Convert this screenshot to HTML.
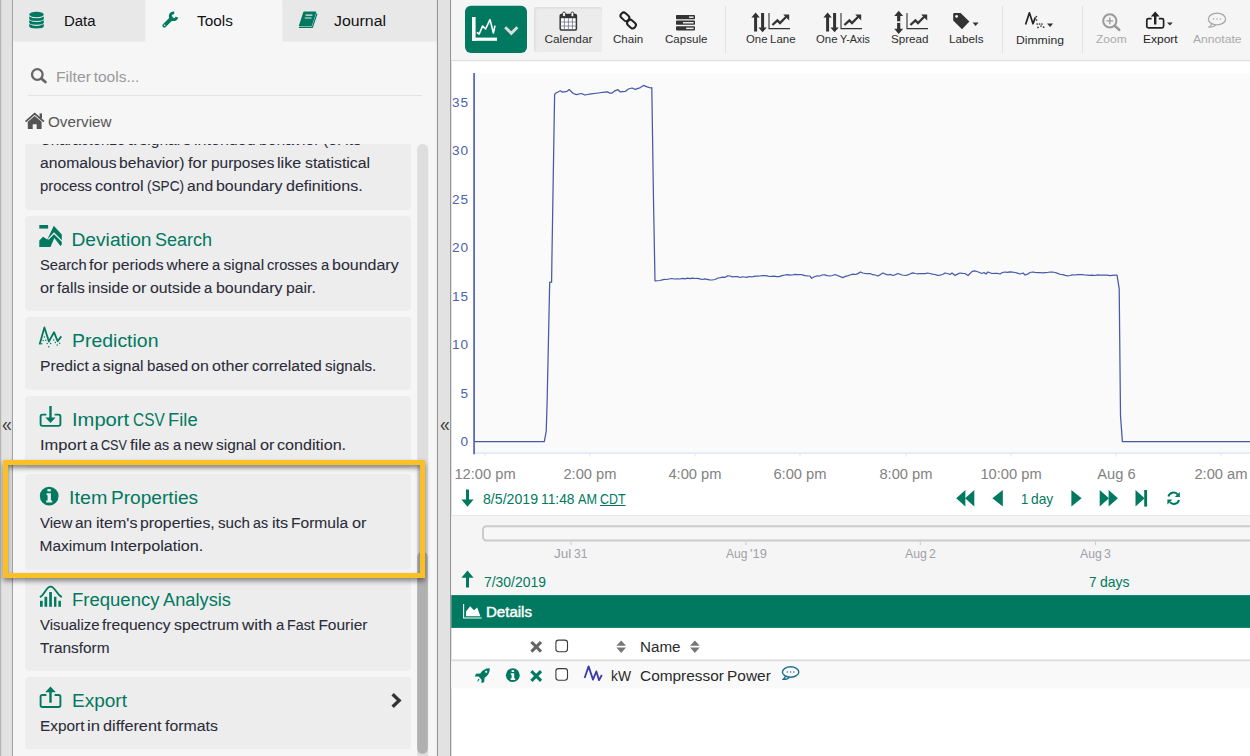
<!DOCTYPE html>
<html lang="en"><head><meta charset="utf-8"><title>Seeq Workbench</title>
<style>
html,body{margin:0;padding:0;}
body{width:1250px;height:756px;overflow:hidden;position:relative;background:#fff;font-family:"Liberation Sans",sans-serif;}
.t{position:absolute;white-space:nowrap;line-height:1;transform-origin:0 50%;display:block;}
.abs{position:absolute;}
svg{position:absolute;overflow:visible;left:0;top:0;}
svg text{font-family:"Liberation Sans",sans-serif;}
</style></head><body>
<svg id="bgl" width="1250" height="756" viewBox="0 0 1250 756">
<rect x="0" y="0" width="13" height="756" fill="#e2e2e2"/>
<rect x="0" y="0" width="1.2" height="756" fill="#b4b4b4"/>
<rect x="11.9" y="0" width="1.1" height="756" fill="#a4a4a4"/>
<rect x="13" y="0" width="424" height="756" fill="#f6f6f6"/>
<rect x="13" y="0" width="132.6" height="41.5" fill="#e8e8e8"/>
<rect x="282.2" y="0" width="155" height="41.5" fill="#e8e8e8"/>
<path d="M145.6,41.5 L145.6,3.5 Q145.6,0 149.1,0 L278.7,0 Q282.2,0 282.2,3.5 L282.2,41.5 Z" fill="#f6f6f6"/>
<rect x="436.9" y="0" width="1.4" height="756" fill="#979797"/>
<rect x="438.3" y="0" width="11.7" height="756" fill="#e2e2e2"/>
<rect x="450" y="0" width="1.3" height="756" fill="#979797"/>
<rect x="28" y="95" width="394" height="1" fill="#e3e3e3"/>
<path d="M25,144 L411,144 L411,206 Q411,210 407,210 L29,210 Q25,210 25,206 Z" fill="#ededed"/>
<rect x="25" y="216" width="386" height="94.8" rx="4" fill="#ededed"/>
<rect x="25" y="316.8" width="386" height="73.0" rx="4" fill="#ededed"/>
<rect x="25" y="396" width="386" height="71.9" rx="4" fill="#ededed"/>
<rect x="25" y="474" width="386" height="95.7" rx="4" fill="#ededed"/>
<rect x="25" y="575.8" width="386" height="95.0" rx="4" fill="#ededed"/>
<rect x="25" y="676.8" width="386" height="72.8" rx="4" fill="#ededed"/>
<rect x="417.2" y="144" width="11" height="640" rx="5.4" fill="#dedede"/>
<rect x="417.2" y="551.6" width="10.6" height="202.2" rx="5.3" fill="#b0b0b0"/>
<rect x="451.3" y="0" width="799" height="60" fill="#f5f5f5"/>
<rect x="451.3" y="60" width="799" height="1.2" fill="#dfdfdf"/>
<rect x="465" y="5.8" width="62" height="47.2" rx="6" fill="#007960"/>
<rect x="534" y="7" width="68" height="45" rx="2" fill="#ececec"/>
<rect x="725" y="6" width="1" height="47" fill="#e2e2e2"/>
<rect x="1002" y="6" width="1" height="47" fill="#e2e2e2"/>
<rect x="1082" y="6" width="1" height="47" fill="#e2e2e2"/>
<rect x="451.3" y="515" width="799" height="1" fill="#e6e6e6"/>
<rect x="451.3" y="516" width="799" height="79.2" fill="#f5f5f5"/>
<rect x="483" y="526.3" width="800" height="14.3" rx="3.5" fill="#f7f7f7" stroke="#cbcbcb" stroke-width="2"/>
<rect x="451.3" y="595.1" width="799" height="32.8" fill="#007960"/>
<rect x="451.3" y="659.4" width="799" height="2.2" fill="#dedede"/>
<rect x="451.3" y="661.6" width="799" height="26.9" fill="#f9f9f9"/>
<g id="chart">
<rect x="475" y="73.6" width="775" height="379.4" fill="#fafafa"/>
<rect x="473.2" y="73" width="1.8" height="381.3" fill="#5c6bb6"/>
<rect x="475" y="452.6" width="775" height="1" fill="#d6dbee"/>
<rect x="484.5" y="453.6" width="1" height="3" fill="#dfe3f3"/>
<rect x="589.5" y="453.6" width="1" height="3" fill="#dfe3f3"/>
<rect x="694.5" y="453.6" width="1" height="3" fill="#dfe3f3"/>
<rect x="799.5" y="453.6" width="1" height="3" fill="#dfe3f3"/>
<rect x="905.5" y="453.6" width="1" height="3" fill="#dfe3f3"/>
<rect x="1010.5" y="453.6" width="1" height="3" fill="#dfe3f3"/>
<rect x="1115.5" y="453.6" width="1" height="3" fill="#dfe3f3"/>
<rect x="1220.5" y="453.6" width="1" height="3" fill="#dfe3f3"/>
<text x="468.8" y="106.7" text-anchor="end" font-size="13.6" fill="#4c5fb0" letter-spacing="0.8">35</text>
<text x="468.8" y="155.2" text-anchor="end" font-size="13.6" fill="#4c5fb0" letter-spacing="0.8">30</text>
<text x="468.8" y="203.8" text-anchor="end" font-size="13.6" fill="#4c5fb0" letter-spacing="0.8">25</text>
<text x="468.8" y="252.3" text-anchor="end" font-size="13.6" fill="#4c5fb0" letter-spacing="0.8">20</text>
<text x="468.8" y="300.8" text-anchor="end" font-size="13.6" fill="#4c5fb0" letter-spacing="0.8">15</text>
<text x="468.8" y="349.3" text-anchor="end" font-size="13.6" fill="#4c5fb0" letter-spacing="0.8">10</text>
<text x="468.8" y="397.9" text-anchor="end" font-size="13.6" fill="#4c5fb0" letter-spacing="0.8">5</text>
<text x="468.8" y="446.4" text-anchor="end" font-size="13.6" fill="#4c5fb0" letter-spacing="0.8">0</text>
<text x="485" y="479" text-anchor="middle" font-size="14.7" fill="#828282">12:00 pm</text>
<text x="590" y="479" text-anchor="middle" font-size="14.7" fill="#828282">2:00 pm</text>
<text x="695" y="479" text-anchor="middle" font-size="14.7" fill="#828282">4:00 pm</text>
<text x="800" y="479" text-anchor="middle" font-size="14.7" fill="#828282">6:00 pm</text>
<text x="906" y="479" text-anchor="middle" font-size="14.7" fill="#828282">8:00 pm</text>
<text x="1011" y="479" text-anchor="middle" font-size="14.7" fill="#828282">10:00 pm</text>
<text x="1116.5" y="479" text-anchor="middle" font-size="14.7" fill="#828282">Aug 6</text>
<text x="1221" y="479" text-anchor="middle" font-size="14.7" fill="#828282">2:00 am</text>
<path fill="none" stroke="#4659a7" stroke-width="1.25" stroke-linejoin="round" d="M474.5,441.6 L544.3,441.6 L546.2,431.4 L547.1,402.9 L549.7,282.2 L551.6,282.2 L551.9,260.0 L554.6,94.7 L555.6,93.2 L560.3,90.8 L562.4,92.1 L567.0,91.4 L569.1,89.5 L573.3,93.5 L576.4,94.7 L581.6,93.5 L584.7,95.0 L591.0,93.9 L598.2,93.0 L604.5,92.1 L607.6,91.8 L609.7,93.2 L611.8,93.2 L614.9,90.8 L618.0,89.7 L620.1,91.8 L625.3,91.4 L628.4,89.0 L632.0,88.0 L635.2,89.3 L640.4,87.6 L643.5,85.4 L647.1,86.9 L650.8,88.0 L651.8,87.6 L653.5,200.0 L655.0,280.8 L660.0,280.5 L662.2,279.9 L664.5,279.4 L666.8,279.5 L669.0,279.0 L671.8,278.5 L674.5,279.0 L677.2,278.9 L680.0,279.0 L682.5,278.4 L685.0,278.8 L687.5,278.2 L690.0,278.6 L692.5,278.1 L695.0,278.5 L697.4,278.3 L699.9,278.8 L702.3,279.5 L704.7,278.9 L707.1,279.3 L709.6,279.9 L712.0,280.0 L715.0,279.5 L718.0,278.0 L720.4,277.7 L722.8,277.1 L725.2,277.3 L727.6,275.9 L730.0,276.0 L732.5,276.8 L735.0,276.5 L737.5,276.7 L740.0,277.5 L742.2,276.9 L744.4,277.0 L746.7,277.3 L748.9,276.5 L751.1,276.8 L753.3,276.7 L755.6,276.2 L757.8,276.2 L760.0,276.0 L762.4,275.6 L764.8,275.7 L767.1,275.9 L769.5,276.5 L771.9,276.3 L774.2,276.2 L776.6,276.6 L779.0,276.6 L782.0,275.7 L785.0,275.0 L787.5,274.7 L790.0,275.2 L792.5,275.0 L795.0,274.4 L797.5,274.7 L800.0,274.5 L802.5,274.9 L805.0,275.7 L807.5,275.9 L810.0,276.0 L811.6,278.3 L815.0,276.5 L817.3,275.8 L819.7,276.0 L822.0,275.0 L824.7,274.9 L827.3,275.6 L830.0,276.0 L832.5,275.5 L835.0,274.5 L842.8,277.7 L845.2,276.4 L847.6,275.9 L850.0,275.0 L853.0,274.2 L856.0,274.5 L858.2,273.4 L860.5,272.0 L862.8,273.0 L865.0,273.5 L867.5,273.6 L870.0,273.5 L872.7,274.7 L875.3,275.0 L878.0,276.0 L883.0,273.0 L885.5,274.2 L888.0,275.0 L890.0,274.3 L893.0,275.5 L895.5,274.6 L898.0,273.5 L902.0,275.0 L906.0,275.5 L908.3,274.7 L910.6,273.7 L912.9,272.9 L915.3,273.5 L917.6,273.8 L920.0,273.5 L922.5,273.5 L925.0,273.7 L927.5,273.0 L930.0,273.5 L932.5,274.1 L935.0,274.5 L937.5,275.3 L940.0,275.2 L942.5,274.5 L945.0,273.0 L947.5,273.5 L950.0,274.5 L952.0,273.0 L955.0,275.5 L957.5,274.1 L960.0,273.0 L962.5,273.4 L965.0,273.5 L968.0,275.5 L972.2,271.4 L974.6,270.9 L977.0,271.5 L979.5,272.5 L982.0,273.5 L984.0,272.5 L986.0,274.0 L988.0,272.0 L992.0,273.5 L994.7,273.3 L997.3,273.4 L1000.0,274.0 L1002.5,272.5 L1005.0,272.0 L1007.5,272.4 L1010.0,271.8 L1012.5,272.1 L1015.0,272.5 L1017.5,273.1 L1020.0,274.0 L1023.0,273.0 L1025.0,275.0 L1027.5,274.2 L1030.0,272.5 L1032.5,272.0 L1035.0,272.4 L1037.5,272.6 L1040.0,272.5 L1042.5,272.8 L1045.0,272.6 L1047.5,272.5 L1050.0,272.0 L1052.5,272.0 L1055.0,272.5 L1057.8,273.4 L1060.5,274.5 L1062.9,274.6 L1065.2,275.4 L1067.6,275.8 L1070.0,275.5 L1072.5,274.9 L1075.0,275.0 L1077.5,274.6 L1080.0,274.7 L1082.5,274.7 L1085.0,275.0 L1087.5,275.1 L1090.0,275.3 L1092.5,275.1 L1095.0,275.5 L1097.5,274.8 L1100.0,275.2 L1102.5,275.0 L1105.0,275.0 L1107.4,275.1 L1109.8,275.6 L1112.2,275.3 L1114.6,275.2 L1117.0,275.2 L1119.2,288.6 L1120.5,415.6 L1122.4,441.6 L1250.0,441.6"/>
</g>
</svg>
<div class="abs" style="left:3px;top:460px;width:411.8px;height:107.9px;border:5.1px solid #fbc124;box-shadow:0 3px 5px rgba(0,0,0,.45), inset 0 3px 5px rgba(0,0,0,.45);"></div>
<div class="abs" style="left:534px;top:7px;width:68px;height:45px;border-radius:2px;box-shadow:inset 1px 1px 3px rgba(0,0,0,.08);"></div>
<span class="t " style="left:2.2px;top:414.9px;font-size:19.5px;color:#3a3a3a;transform:scaleX(0.9);">«</span>
<span class="t " style="left:440.2px;top:414.9px;font-size:19.5px;color:#3a3a3a;transform:scaleX(0.9);">«</span>
<span class="t " style="left:63.5px;top:12.9px;font-size:15.5px;color:#111;transform:scaleX(0.9651);">Data</span>
<span class="t " style="left:196.5px;top:12.9px;font-size:15.5px;color:#111;transform:scaleX(0.9894);">Tools</span>
<span class="t " style="left:333.5px;top:12.9px;font-size:15.5px;color:#111;transform:scaleX(1.0228);">Journal</span>
<span class="t " style="left:55.5px;top:68.7px;font-size:15.5px;color:#9a9a9a;transform:scaleX(1.0157);">Filter</span>
<span class="t " style="left:93.7px;top:68.7px;font-size:15.5px;color:#9a9a9a;">tools...</span>
<span class="t " style="left:48.0px;top:113.7px;font-size:15.5px;color:#555;transform:scaleX(0.9830);">Overview</span>
<div class="abs" style="left:25px;top:144px;width:386px;height:10px;overflow:hidden;"><span class="t " style="left:14.5px;top:-12.5px;font-size:15.5px;color:#2b2b3a;transform:scaleX(0.9707);">Characterize</span>
<span class="t " style="left:103.1px;top:-12.5px;font-size:15.5px;color:#2b2b3a;transform:scaleX(0.9559);">a</span>
<span class="t " style="left:114.6px;top:-12.5px;font-size:15.5px;color:#2b2b3a;">signal's</span>
<span class="t " style="left:168.9px;top:-12.5px;font-size:15.5px;color:#2b2b3a;transform:scaleX(1.0354);">intended</span>
<span class="t " style="left:233.8px;top:-12.5px;font-size:15.5px;color:#2b2b3a;transform:scaleX(1.0172);">behavior</span>
<span class="t " style="left:297.5px;top:-12.5px;font-size:15.5px;color:#2b2b3a;transform:scaleX(1.0287);">(or</span>
<span class="t " style="left:320.3px;top:-12.5px;font-size:15.5px;color:#2b2b3a;transform:scaleX(1.0474);">its</span>
</div>
<span class="t " style="left:39.5px;top:154.5px;font-size:15.5px;color:#2b2b3a;transform:scaleX(1.0103);-webkit-text-stroke:0.08px #2b2b3a;">anomalous</span>
<span class="t " style="left:119.4px;top:154.5px;font-size:15.5px;color:#2b2b3a;transform:scaleX(1.0124);-webkit-text-stroke:0.08px #2b2b3a;">behavior)</span>
<span class="t " style="left:188.1px;top:154.5px;font-size:15.5px;color:#2b2b3a;transform:scaleX(1.0584);-webkit-text-stroke:0.08px #2b2b3a;">for</span>
<span class="t " style="left:210.5px;top:154.5px;font-size:15.5px;color:#2b2b3a;transform:scaleX(0.9934);-webkit-text-stroke:0.08px #2b2b3a;">purposes</span>
<span class="t " style="left:277.1px;top:154.5px;font-size:15.5px;color:#2b2b3a;transform:scaleX(1.0360);-webkit-text-stroke:0.08px #2b2b3a;">like</span>
<span class="t " style="left:304.5px;top:154.5px;font-size:15.5px;color:#2b2b3a;transform:scaleX(1.0202);-webkit-text-stroke:0.08px #2b2b3a;">statistical</span>
<span class="t " style="left:39.5px;top:177.5px;font-size:15.5px;color:#2b2b3a;transform:scaleX(0.9585);-webkit-text-stroke:0.08px #2b2b3a;">process</span>
<span class="t " style="left:94.8px;top:177.5px;font-size:15.5px;color:#2b2b3a;transform:scaleX(1.0459);-webkit-text-stroke:0.08px #2b2b3a;">control</span>
<span class="t " style="left:146.7px;top:177.5px;font-size:15.5px;color:#2b2b3a;transform:scaleX(0.8764);-webkit-text-stroke:0.08px #2b2b3a;">(SPC)</span>
<span class="t " style="left:186.9px;top:177.5px;font-size:15.5px;color:#2b2b3a;transform:scaleX(1.0086);-webkit-text-stroke:0.08px #2b2b3a;">and</span>
<span class="t " style="left:216.2px;top:177.5px;font-size:15.5px;color:#2b2b3a;transform:scaleX(1.0263);-webkit-text-stroke:0.08px #2b2b3a;">boundary</span>
<span class="t " style="left:285.8px;top:177.5px;font-size:15.5px;color:#2b2b3a;transform:scaleX(1.0347);-webkit-text-stroke:0.08px #2b2b3a;">definitions.</span>
<span class="t " style="left:71.5px;top:230.2px;font-size:19.2px;color:#007960;">Deviation</span>
<span class="t " style="left:155.4px;top:230.2px;font-size:19.2px;color:#007960;transform:scaleX(0.9393);">Search</span>
<span class="t " style="left:39.5px;top:256.5px;font-size:15.5px;color:#2b2b3a;transform:scaleX(0.9492);-webkit-text-stroke:0.08px #2b2b3a;">Search</span>
<span class="t " style="left:89.4px;top:256.5px;font-size:15.5px;color:#2b2b3a;transform:scaleX(1.0563);-webkit-text-stroke:0.08px #2b2b3a;">for</span>
<span class="t " style="left:111.8px;top:256.5px;font-size:15.5px;color:#2b2b3a;transform:scaleX(1.0142);-webkit-text-stroke:0.08px #2b2b3a;">periods</span>
<span class="t " style="left:166.6px;top:256.5px;font-size:15.5px;color:#2b2b3a;-webkit-text-stroke:0.08px #2b2b3a;">where</span>
<span class="t " style="left:212.1px;top:256.5px;font-size:15.5px;color:#2b2b3a;transform:scaleX(0.9539);-webkit-text-stroke:0.08px #2b2b3a;">a</span>
<span class="t " style="left:223.6px;top:256.5px;font-size:15.5px;color:#2b2b3a;-webkit-text-stroke:0.08px #2b2b3a;">signal</span>
<span class="t " style="left:267.3px;top:256.5px;font-size:15.5px;color:#2b2b3a;transform:scaleX(0.9428);-webkit-text-stroke:0.08px #2b2b3a;">crosses</span>
<span class="t " style="left:320.9px;top:256.5px;font-size:15.5px;color:#2b2b3a;transform:scaleX(0.9539);-webkit-text-stroke:0.08px #2b2b3a;">a</span>
<span class="t " style="left:332.4px;top:256.5px;font-size:15.5px;color:#2b2b3a;transform:scaleX(1.0310);-webkit-text-stroke:0.08px #2b2b3a;">boundary</span>
<span class="t " style="left:39.5px;top:279.5px;font-size:15.5px;color:#2b2b3a;transform:scaleX(1.0509);-webkit-text-stroke:0.08px #2b2b3a;">or</span>
<span class="t " style="left:57.2px;top:279.5px;font-size:15.5px;color:#2b2b3a;transform:scaleX(1.0077);-webkit-text-stroke:0.08px #2b2b3a;">falls</span>
<span class="t " style="left:88.3px;top:279.5px;font-size:15.5px;color:#2b2b3a;transform:scaleX(1.0093);-webkit-text-stroke:0.08px #2b2b3a;">inside</span>
<span class="t " style="left:132.4px;top:279.5px;font-size:15.5px;color:#2b2b3a;transform:scaleX(1.0509);-webkit-text-stroke:0.08px #2b2b3a;">or</span>
<span class="t " style="left:150.2px;top:279.5px;font-size:15.5px;color:#2b2b3a;transform:scaleX(1.0202);-webkit-text-stroke:0.08px #2b2b3a;">outside</span>
<span class="t " style="left:204.4px;top:279.5px;font-size:15.5px;color:#2b2b3a;transform:scaleX(0.9525);-webkit-text-stroke:0.08px #2b2b3a;">a</span>
<span class="t " style="left:215.9px;top:279.5px;font-size:15.5px;color:#2b2b3a;transform:scaleX(1.0295);-webkit-text-stroke:0.08px #2b2b3a;">boundary</span>
<span class="t " style="left:285.7px;top:279.5px;font-size:15.5px;color:#2b2b3a;transform:scaleX(1.0177);-webkit-text-stroke:0.08px #2b2b3a;">pair.</span>
<span class="t " style="left:71.5px;top:331.2px;font-size:19.2px;color:#007960;transform:scaleX(1.0131);">Prediction</span>
<span class="t " style="left:39.5px;top:357.7px;font-size:15.5px;color:#2b2b3a;transform:scaleX(1.0102);-webkit-text-stroke:0.08px #2b2b3a;">Predict</span>
<span class="t " style="left:91.5px;top:357.7px;font-size:15.5px;color:#2b2b3a;transform:scaleX(0.9548);-webkit-text-stroke:0.08px #2b2b3a;">a</span>
<span class="t " style="left:103.0px;top:357.7px;font-size:15.5px;color:#2b2b3a;-webkit-text-stroke:0.08px #2b2b3a;">signal</span>
<span class="t " style="left:146.7px;top:357.7px;font-size:15.5px;color:#2b2b3a;transform:scaleX(0.9718);-webkit-text-stroke:0.08px #2b2b3a;">based</span>
<span class="t " style="left:191.0px;top:357.7px;font-size:15.5px;color:#2b2b3a;transform:scaleX(1.0316);-webkit-text-stroke:0.08px #2b2b3a;">on</span>
<span class="t " style="left:212.0px;top:357.7px;font-size:15.5px;color:#2b2b3a;transform:scaleX(1.0399);-webkit-text-stroke:0.08px #2b2b3a;">other</span>
<span class="t " style="left:252.0px;top:357.7px;font-size:15.5px;color:#2b2b3a;transform:scaleX(1.0135);-webkit-text-stroke:0.08px #2b2b3a;">correlated</span>
<span class="t " style="left:325.2px;top:357.7px;font-size:15.5px;color:#2b2b3a;transform:scaleX(0.9766);-webkit-text-stroke:0.08px #2b2b3a;">signals.</span>
<span class="t " style="left:71.5px;top:410.0px;font-size:19.2px;color:#007960;transform:scaleX(1.0503);">Import</span>
<span class="t " style="left:132.6px;top:410.0px;font-size:19.2px;color:#007960;transform:scaleX(0.8041);">CSV</span>
<span class="t " style="left:168.3px;top:410.0px;font-size:19.2px;color:#007960;transform:scaleX(0.9583);">File</span>
<span class="t " style="left:39.5px;top:436.5px;font-size:15.5px;color:#2b2b3a;transform:scaleX(1.0645);-webkit-text-stroke:0.08px #2b2b3a;">Import</span>
<span class="t " style="left:89.5px;top:436.5px;font-size:15.5px;color:#2b2b3a;transform:scaleX(0.9512);-webkit-text-stroke:0.08px #2b2b3a;">a</span>
<span class="t " style="left:101.0px;top:436.5px;font-size:15.5px;color:#2b2b3a;transform:scaleX(0.8149);-webkit-text-stroke:0.08px #2b2b3a;">CSV</span>
<span class="t " style="left:130.2px;top:436.5px;font-size:15.5px;color:#2b2b3a;transform:scaleX(1.0585);-webkit-text-stroke:0.08px #2b2b3a;">file</span>
<span class="t " style="left:154.4px;top:436.5px;font-size:15.5px;color:#2b2b3a;transform:scaleX(0.9173);-webkit-text-stroke:0.08px #2b2b3a;">as</span>
<span class="t " style="left:172.7px;top:436.5px;font-size:15.5px;color:#2b2b3a;transform:scaleX(0.9512);-webkit-text-stroke:0.08px #2b2b3a;">a</span>
<span class="t " style="left:184.1px;top:436.5px;font-size:15.5px;color:#2b2b3a;transform:scaleX(1.0112);-webkit-text-stroke:0.08px #2b2b3a;">new</span>
<span class="t " style="left:216.2px;top:436.5px;font-size:15.5px;color:#2b2b3a;transform:scaleX(0.9943);-webkit-text-stroke:0.08px #2b2b3a;">signal</span>
<span class="t " style="left:259.7px;top:436.5px;font-size:15.5px;color:#2b2b3a;transform:scaleX(1.0495);-webkit-text-stroke:0.08px #2b2b3a;">or</span>
<span class="t " style="left:277.4px;top:436.5px;font-size:15.5px;color:#2b2b3a;transform:scaleX(1.0414);-webkit-text-stroke:0.08px #2b2b3a;">condition.</span>
<span class="t " style="left:68.7px;top:487.8px;font-size:19.2px;color:#007960;transform:scaleX(1.0275);">Item</span>
<span class="t " style="left:111.1px;top:487.8px;font-size:19.2px;color:#007960;transform:scaleX(0.9955);">Properties</span>
<span class="t " style="left:39.5px;top:515.2px;font-size:15.5px;color:#2b2b3a;transform:scaleX(0.9695);-webkit-text-stroke:0.08px #2b2b3a;">View</span>
<span class="t " style="left:75.1px;top:515.2px;font-size:15.5px;color:#2b2b3a;transform:scaleX(0.9939);-webkit-text-stroke:0.08px #2b2b3a;">an</span>
<span class="t " style="left:95.5px;top:515.2px;font-size:15.5px;color:#2b2b3a;transform:scaleX(1.0369);-webkit-text-stroke:0.08px #2b2b3a;">item's</span>
<span class="t " style="left:140.2px;top:515.2px;font-size:15.5px;color:#2b2b3a;transform:scaleX(1.0197);-webkit-text-stroke:0.08px #2b2b3a;">properties,</span>
<span class="t " style="left:218.1px;top:515.2px;font-size:15.5px;color:#2b2b3a;transform:scaleX(0.9775);-webkit-text-stroke:0.08px #2b2b3a;">such</span>
<span class="t " style="left:253.4px;top:515.2px;font-size:15.5px;color:#2b2b3a;transform:scaleX(0.9193);-webkit-text-stroke:0.08px #2b2b3a;">as</span>
<span class="t " style="left:271.7px;top:515.2px;font-size:15.5px;color:#2b2b3a;transform:scaleX(1.0445);-webkit-text-stroke:0.08px #2b2b3a;">its</span>
<span class="t " style="left:291.2px;top:515.2px;font-size:15.5px;color:#2b2b3a;transform:scaleX(1.0042);-webkit-text-stroke:0.08px #2b2b3a;">Formula</span>
<span class="t " style="left:351.5px;top:515.2px;font-size:15.5px;color:#2b2b3a;transform:scaleX(1.0517);-webkit-text-stroke:0.08px #2b2b3a;">or</span>
<span class="t " style="left:39.5px;top:538.2px;font-size:15.5px;color:#2b2b3a;-webkit-text-stroke:0.08px #2b2b3a;">Maximum</span>
<span class="t " style="left:109.7px;top:538.2px;font-size:15.5px;color:#2b2b3a;transform:scaleX(1.0406);-webkit-text-stroke:0.08px #2b2b3a;">Interpolation.</span>
<span class="t " style="left:71.5px;top:590.0px;font-size:19.2px;color:#007960;transform:scaleX(0.9649);">Frequency</span>
<span class="t " style="left:163.0px;top:590.0px;font-size:19.2px;color:#007960;transform:scaleX(0.9507);">Analysis</span>
<span class="t " style="left:39.5px;top:617.1px;font-size:15.5px;color:#2b2b3a;transform:scaleX(0.9636);-webkit-text-stroke:0.08px #2b2b3a;">Visualize</span>
<span class="t " style="left:102.3px;top:617.1px;font-size:15.5px;color:#2b2b3a;transform:scaleX(1.0077);-webkit-text-stroke:0.08px #2b2b3a;">frequency</span>
<span class="t " style="left:174.1px;top:617.1px;font-size:15.5px;color:#2b2b3a;transform:scaleX(1.0191);-webkit-text-stroke:0.08px #2b2b3a;">spectrum</span>
<span class="t " style="left:242.4px;top:617.1px;font-size:15.5px;color:#2b2b3a;transform:scaleX(1.0953);-webkit-text-stroke:0.08px #2b2b3a;">with</span>
<span class="t " style="left:275.8px;top:617.1px;font-size:15.5px;color:#2b2b3a;transform:scaleX(0.9557);-webkit-text-stroke:0.08px #2b2b3a;">a</span>
<span class="t " style="left:287.3px;top:617.1px;font-size:15.5px;color:#2b2b3a;transform:scaleX(0.9225);-webkit-text-stroke:0.08px #2b2b3a;">Fast</span>
<span class="t " style="left:318.4px;top:617.1px;font-size:15.5px;color:#2b2b3a;-webkit-text-stroke:0.08px #2b2b3a;">Fourier</span>
<span class="t " style="left:39.5px;top:640.1px;font-size:15.5px;color:#2b2b3a;transform:scaleX(0.9922);-webkit-text-stroke:0.08px #2b2b3a;">Transform</span>
<span class="t " style="left:71.5px;top:691.2px;font-size:19.2px;color:#007960;transform:scaleX(0.9911);">Export</span>
<span class="t " style="left:39.5px;top:717.7px;font-size:15.5px;color:#2b2b3a;transform:scaleX(0.9925);-webkit-text-stroke:0.08px #2b2b3a;">Export</span>
<span class="t " style="left:87.2px;top:717.7px;font-size:15.5px;color:#2b2b3a;transform:scaleX(1.0729);-webkit-text-stroke:0.08px #2b2b3a;">in</span>
<span class="t " style="left:103.4px;top:717.7px;font-size:15.5px;color:#2b2b3a;transform:scaleX(1.0491);-webkit-text-stroke:0.08px #2b2b3a;">different</span>
<span class="t " style="left:165.2px;top:717.7px;font-size:15.5px;color:#2b2b3a;transform:scaleX(1.0224);-webkit-text-stroke:0.08px #2b2b3a;">formats</span>
<span class="t " style="left:544.5px;top:33.9px;font-size:11.8px;color:#2c2c2c;">Calendar</span>
<span class="t " style="left:613.3px;top:33.9px;font-size:11.8px;color:#2c2c2c;transform:scaleX(0.9795);">Chain</span>
<span class="t " style="left:664.5px;top:33.9px;font-size:11.8px;color:#2c2c2c;transform:scaleX(0.9816);">Capsule</span>
<span class="t " style="left:745.5px;top:33.9px;font-size:11.8px;color:#2c2c2c;transform:scaleX(0.9615);">One</span>
<span class="t " style="left:769.5px;top:33.9px;font-size:11.8px;color:#2c2c2c;transform:scaleX(0.9730);">Lane</span>
<span class="t " style="left:816.0px;top:33.9px;font-size:11.8px;color:#2c2c2c;transform:scaleX(0.9660);">One</span>
<span class="t " style="left:840.1px;top:33.9px;font-size:11.8px;color:#2c2c2c;transform:scaleX(0.9067);">Y-Axis</span>
<span class="t " style="left:890.5px;top:33.9px;font-size:11.8px;color:#2c2c2c;transform:scaleX(0.9855);">Spread</span>
<span class="t " style="left:949.0px;top:33.9px;font-size:11.8px;color:#2c2c2c;transform:scaleX(0.9921);">Labels</span>
<span class="t " style="left:1016.0px;top:34.9px;font-size:11.8px;color:#2c2c2c;transform:scaleX(1.0311);">Dimming</span>
<span class="t " style="left:1095.7px;top:33.9px;font-size:11.8px;color:#aaa;transform:scaleX(1.0178);">Zoom</span>
<span class="t " style="left:1142.5px;top:33.9px;font-size:11.8px;color:#222;transform:scaleX(1.0175);">Export</span>
<span class="t " style="left:1192.7px;top:33.9px;font-size:11.8px;color:#aaa;transform:scaleX(1.0288);">Annotate</span>
<span class="t " style="left:483.0px;top:491.7px;font-size:14.5px;color:#007960;transform:scaleX(0.9756);">8/5/2019</span>
<span class="t " style="left:541.1px;top:491.7px;font-size:14.5px;color:#007960;transform:scaleX(0.9502);">11:48</span>
<span class="t " style="left:577.5px;top:491.7px;font-size:14.5px;color:#007960;transform:scaleX(0.8732);">AM</span>
<span class="t " style="left:599.5px;top:491.7px;font-size:14.5px;color:#007960;transform:scaleX(0.8557);text-decoration:underline;">CDT</span>
<span class="t " style="left:1020.5px;top:491.9px;font-size:14.5px;color:#007960;transform:scaleX(0.8983);">1</span>
<span class="t " style="left:1030.7px;top:491.9px;font-size:14.5px;color:#007960;transform:scaleX(0.9513);">day</span>
<span class="t " style="left:554.3px;top:547.6px;font-size:12.5px;color:#a0a0a8;transform:scaleX(1.0838);">Jul</span>
<span class="t " style="left:574.3px;top:547.6px;font-size:12.5px;color:#a0a0a8;transform:scaleX(0.9688);">31</span>
<span class="t " style="left:725.5px;top:547.6px;font-size:12.5px;color:#a0a0a8;transform:scaleX(0.9648);">Aug</span>
<span class="t " style="left:749.7px;top:547.6px;font-size:12.5px;color:#a0a0a8;transform:scaleX(1.0333);">'19</span>
<span class="t " style="left:904.5px;top:547.6px;font-size:12.5px;color:#a0a0a8;transform:scaleX(0.9836);">Aug</span>
<span class="t " style="left:929.1px;top:547.6px;font-size:12.5px;color:#a0a0a8;transform:scaleX(0.9870);">2</span>
<span class="t " style="left:1079.8px;top:547.6px;font-size:12.5px;color:#a0a0a8;transform:scaleX(0.9836);">Aug</span>
<span class="t " style="left:1104.4px;top:547.6px;font-size:12.5px;color:#a0a0a8;transform:scaleX(0.9870);">3</span>
<span class="t " style="left:483.5px;top:574.7px;font-size:14.5px;color:#007960;transform:scaleX(0.9611);">7/30/2019</span>
<span class="t " style="left:1089.0px;top:574.7px;font-size:14.5px;color:#007960;transform:scaleX(0.9331);">7</span>
<span class="t " style="left:1099.6px;top:574.7px;font-size:14.5px;color:#007960;transform:scaleX(0.9614);">days</span>
<span class="t " style="left:485.5px;top:603.6px;font-size:15.3px;color:#fff;transform:scaleX(0.9836);-webkit-text-stroke:0.45px #fff;">Details</span>
<span class="t " style="left:640.0px;top:638.5px;font-size:15.5px;color:#2a2a2a;transform:scaleX(0.9795);">Name</span>
<span class="t " style="left:611.2px;top:667.9px;font-size:15.5px;color:#2a2a2a;transform:scaleX(0.8937);">kW</span>
<span class="t " style="left:640.0px;top:667.9px;font-size:15.5px;color:#2a2a2a;transform:scaleX(0.9939);">Compressor</span>
<span class="t " style="left:727.2px;top:667.9px;font-size:15.5px;color:#2a2a2a;transform:scaleX(0.9965);">Power</span>
<svg id="ov" width="1250" height="756" viewBox="0 0 1250 756">
<rect x="570.5" y="541.6" width="1" height="3.5" fill="#ccc"/>
<rect x="745.5" y="541.6" width="1" height="3.5" fill="#ccc"/>
<rect x="919.8" y="541.6" width="1" height="3.5" fill="#ccc"/>
<rect x="1095.0" y="541.6" width="1" height="3.5" fill="#ccc"/>
<g fill="#007960"><ellipse cx="36.5" cy="14.5" rx="7.3" ry="2.8"/>
<path d="M29.2,16.400000000000002 Q36.5,20.200000000000003 43.8,16.400000000000002 L43.8,18.799999999999997 Q43.6,21.0 36.5,21.0 Q29.4,21.0 29.2,18.799999999999997 Z"/>
<path d="M29.2,20.2 Q36.5,24.0 43.8,20.2 L43.8,22.599999999999998 Q43.6,24.8 36.5,24.8 Q29.4,24.8 29.2,22.599999999999998 Z"/>
<path d="M29.2,24.0 Q36.5,27.8 43.8,24.0 L43.8,26.2 Q43.6,28.400000000000002 36.5,28.400000000000002 Q29.4,28.400000000000002 29.2,26.2 Z"/>
</g>
<g stroke="#007960" fill="none"><path d="M164.3,25.6 L171.6,18.4" stroke-width="3.9" stroke-linecap="round"/><path d="M176.9,17.2 A3.4,3.4 0 1 1 174.2,12.9" stroke-width="2.9"/></g>
<circle cx="164.6" cy="25.3" r="0.8" fill="#f6f6f6"/>
<g><path d="M304,12.3 L315.6,12.3 L311.2,25.6 L299.6,25.6 Z" fill="#007960" stroke="#007960" stroke-width="1.4" stroke-linejoin="round"/><path d="M299.4,27.4 L312.4,27.4 L316.8,14" fill="none" stroke="#007960" stroke-width="1.2" stroke-linejoin="round" stroke-linecap="round"/><path d="M305.6,15.2 L312.4,15.2 M304.8,18 L311.6,18" stroke="#e8e8e8" stroke-width="1.2"/></g>
<g stroke="#666" fill="none"><circle cx="37.3" cy="74.5" r="5.3" stroke-width="2.3"/><path d="M41.4,78.6 L45.4,82" stroke-width="2.8" stroke-linecap="round"/></g>
<g fill="#555"><path d="M25.6,121.6 L34.7,113.6 L43.9,121.6" fill="none" stroke="#555" stroke-width="1.9" stroke-linejoin="round"/><path d="M27.8,121.8 L34.7,115.9 L41.6,121.8 L41.6,129 L36.7,129 L36.7,124.2 L32.7,124.2 L32.7,129 L27.8,129 Z"/><rect x="39.6" y="113.4" width="2.4" height="5"/></g>
<g transform="translate(39,225)" fill="#007960"><rect x="0.3" y="0" width="8.8" height="3.6"/><path d="M0.3,15.5 L4,11.8 L8.3,14.6 L14.8,0.8 L22.8,9.6 L22.8,19.6 L21.4,21 L15.3,13 L11.5,22 L0.3,22 Z"/><path d="M9.2,14.4 L15,8.2 L23.2,16.4" fill="none" stroke="#ededed" stroke-width="1.3"/></g>
<g><path d="M39.6,344.5 L44.4,327.4 L48.9,341.6 L54,332.2 L57.6,341.2 L61.3,336.4" fill="none" stroke="#007960" stroke-width="1.8" stroke-linejoin="round"/>
<circle cx="44.4" cy="337" r="0.75" fill="#007960"/>
<circle cx="43.2" cy="340.5" r="0.75" fill="#007960"/>
<circle cx="45.8" cy="340.3" r="0.75" fill="#007960"/>
<circle cx="41.6" cy="343.8" r="0.75" fill="#007960"/>
<circle cx="47.2" cy="343.6" r="0.75" fill="#007960"/>
<circle cx="50.6" cy="343.6" r="0.75" fill="#007960"/>
<circle cx="48.8" cy="346.8" r="0.75" fill="#007960"/>
<circle cx="53.6" cy="340" r="0.75" fill="#007960"/>
<circle cx="55.3" cy="342.6" r="0.75" fill="#007960"/>
<circle cx="57.2" cy="345" r="0.75" fill="#007960"/>
<circle cx="59.6" cy="343.2" r="0.75" fill="#007960"/>
</g>
<path d="M46.4,414.6 L42.4,414.6 Q40.6,414.6 40.6,416.40000000000003 L40.6,424.09999999999997 Q40.6,425.9 42.4,425.9 L58.6,425.9 Q60.4,425.9 60.4,424.09999999999997 L60.4,416.40000000000003 Q60.4,414.6 58.6,414.6 L54.6,414.6" fill="none" stroke="#007960" stroke-width="1.9"/>
<path d="M49.3,406 L51.7,406 L51.7,417.6 L55.6,417.6 L50.5,423 L45.4,417.6 L49.3,417.6 Z" fill="#007960"/>
<circle cx="49.2" cy="496.1" r="9.4" fill="#007960"/><rect x="47.4" y="489.1" width="3.4" height="2.3" fill="#ededed"/><path d="M46.6,493.2 L50.9,493.2 L50.9,500.4 L52.2,500.4 L52.2,502.6 L46.2,502.6 L46.2,500.4 L47.6,500.4 L47.6,495.3 L46.6,495.3 Z" fill="#ededed"/>
<g fill="#007960">
<rect x="40" y="600.8" width="2.7" height="6.0"/>
<rect x="44.5" y="596.8" width="2.7" height="10.0"/>
<rect x="49.2" y="592" width="2.7" height="14.8"/>
<rect x="54" y="596.8" width="2.4" height="10.0"/>
<rect x="58.4" y="600.8" width="2.5" height="6.0"/>
<path d="M39.9,597.2 C45,594.5 46,586.6 50.6,586.6 C55.2,586.6 56.4,594.5 61.8,597.2" fill="none" stroke="#007960" stroke-width="1.9"/></g>
<path d="M46.4,695 L42.4,695 Q40.6,695 40.6,696.8 L40.6,705.2 Q40.6,707 42.4,707 L58.6,707 Q60.4,707 60.4,705.2 L60.4,696.8 Q60.4,695 58.6,695 L54.6,695" fill="none" stroke="#007960" stroke-width="1.9"/>
<path d="M50.5,686.4 L55.8,692.2 L51.7,692.2 L51.7,702.8 L49.3,702.8 L49.3,692.2 L45.2,692.2 Z" fill="#007960"/>
<path d="M392.6,694.2 L399.2,700.5 L392.6,706.8" fill="none" stroke="#333" stroke-width="3.3"/>
<g fill="#fff"><rect x="472" y="17" width="3.6" height="23.8"/><rect x="472" y="37.6" width="25" height="3.2"/><path d="M476.8,32.4 L479.2,34 L482.6,26 L485.6,29 L490,19.6 L493.4,33 L495,25.6" fill="none" stroke="#fff" stroke-width="1.6" stroke-linejoin="round"/></g>
<path d="M505.2,27.2 L511.3,33.3 L517.4,27.2" fill="none" stroke="#dcdcdc" stroke-width="3"/>
<g><rect x="560.2" y="14.6" width="16.2" height="15.4" rx="1.2" fill="#fff" stroke="#333" stroke-width="1.5"/><rect x="560.2" y="14.6" width="16.2" height="3.6" fill="#333"/>
<rect x="563.9" y="18" width="0.8" height="12" fill="#6a6a9a"/>
<rect x="567.9" y="18" width="0.8" height="12" fill="#6a6a9a"/>
<rect x="571.9" y="18" width="0.8" height="12" fill="#6a6a9a"/>
<rect x="560.2" y="21.6" width="16.2" height="0.8" fill="#777"/>
<rect x="560.2" y="25.6" width="16.2" height="0.8" fill="#777"/>
<rect x="562.6" y="12.1" width="2.8" height="4.6" rx="1.3" fill="#fff" stroke="#333" stroke-width="1"/>
<rect x="571.0" y="12.1" width="2.8" height="4.6" rx="1.3" fill="#fff" stroke="#333" stroke-width="1"/>
</g>
<g fill="none" stroke="#222" stroke-width="2"><rect x="-4.6" y="-3.1" width="9.2" height="6.2" rx="2.7" transform="translate(624.9,16.8) rotate(42)"/><rect x="-4.6" y="-3.1" width="9.2" height="6.2" rx="2.7" transform="translate(631.5,24.1) rotate(42)"/></g>
<g fill="#333"><rect x="676" y="15" width="19" height="4.2" rx="0.8"/><rect x="676" y="20.6" width="19" height="4.2" rx="0.8"/><rect x="676" y="26.2" width="19" height="4.2" rx="0.8"/><g fill="#e8e8e8"><rect x="689" y="16.4" width="4.6" height="1.5"/><rect x="683" y="22" width="10.6" height="1.5"/><rect x="686.2" y="27.6" width="7.4" height="1.5"/></g></g>
<g transform="translate(0,0)" fill="#333"><path d="M755.6,12.6 L759.8,17.4 L757.1,17.4 L757.1,31.6 L754.1,31.6 L754.1,17.4 L751.4,17.4 Z"/><path d="M762.6,32.2 L758.4,27.4 L761.1,27.4 L761.1,13 L764.1,13 L764.1,27.4 L766.8,27.4 Z"/></g><g transform="translate(0,0)"><path d="M769,13 L769,28.6 L790,28.6" fill="none" stroke="#333" stroke-width="1.1"/><path d="M772.4,25 L777.4,20.4 L780,23 L786.2,16.8" fill="none" stroke="#333" stroke-width="2.3"/><path d="M783.2,14.4 L789.2,14.4 L789.2,20.4 Z" fill="#333"/></g>
<g transform="translate(72,0)" fill="#333"><path d="M755.6,12.6 L759.8,17.4 L757.1,17.4 L757.1,31.6 L754.1,31.6 L754.1,17.4 L751.4,17.4 Z"/><path d="M762.6,32.2 L758.4,27.4 L761.1,27.4 L761.1,13 L764.1,13 L764.1,27.4 L766.8,27.4 Z"/></g><g transform="translate(72,0)"><path d="M769,13 L769,28.6 L790,28.6" fill="none" stroke="#333" stroke-width="1.1"/><path d="M772.4,25 L777.4,20.4 L780,23 L786.2,16.8" fill="none" stroke="#333" stroke-width="2.3"/><path d="M783.2,14.4 L789.2,14.4 L789.2,20.4 Z" fill="#333"/></g>
<path d="M898.7,10.8 L903.2,16 L900.3,16 L900.3,28.8 L903.2,28.8 L898.7,34 L894.2,28.8 L897.1,28.8 L897.1,16 L894.2,16 Z" fill="#333"/><g transform="translate(138,0)"><path d="M769,13 L769,28.6 L790,28.6" fill="none" stroke="#333" stroke-width="1.1"/><path d="M772.4,25 L777.4,20.4 L780,23 L786.2,16.8" fill="none" stroke="#333" stroke-width="2.3"/><path d="M783.2,14.4 L789.2,14.4 L789.2,20.4 Z" fill="#333"/></g>
<rect x="896.6" y="21.3" width="4.2" height="1.6" fill="#f5f5f5"/>
<path d="M953.2,14 Q953.2,13 954.2,13 L960.6,13 L969.4,21.6 L962,29.2 L953.2,20.4 Z" fill="#333"/><circle cx="956.6" cy="16.4" r="1.4" fill="#f5f5f5"/><path d="M972.6,22.6 L978.6,22.6 L975.6,26 Z" fill="#333"/>
<path d="M1025.6,24.6 L1029.4,12.8 L1033,23.8 L1035.4,17.4" fill="none" stroke="#222" stroke-width="1.7" stroke-linejoin="round"/><path d="M1047,23.4 L1053.2,23.4 L1050.1,27 Z" fill="#333"/>
<circle cx="1036.4" cy="16.6" r="0.85" fill="#333"/>
<circle cx="1036.6" cy="20" r="0.85" fill="#333"/>
<circle cx="1037.2" cy="24" r="0.85" fill="#333"/>
<circle cx="1039.6" cy="24" r="0.85" fill="#333"/>
<circle cx="1042" cy="24" r="0.85" fill="#333"/>
<circle cx="1038" cy="27.4" r="0.85" fill="#333"/>
<circle cx="1041" cy="26" r="0.85" fill="#333"/>
<circle cx="1043.6" cy="27.2" r="0.85" fill="#333"/>
<g stroke="#9a9a9a" fill="none"><circle cx="1109.8" cy="20.9" r="6.6" stroke-width="2"/><path d="M1114.6,25.8 L1119.2,29.8" stroke-width="2.6" stroke-linecap="round"/><path d="M1106.4,20.9 L1113.2,20.9 M1109.8,17.5 L1109.8,24.3" stroke-width="1.3"/></g>
<path d="M1151.6,18.6 L1148.3999999999999,18.6 Q1146.8,18.6 1146.8,20.200000000000003 L1146.8,26.2 Q1146.8,27.8 1148.3999999999999,27.8 L1162.0,27.8 Q1163.6,27.8 1163.6,26.2 L1163.6,20.200000000000003 Q1163.6,18.6 1162.0,18.6 L1158.8,18.6" fill="none" stroke="#222" stroke-width="1.7"/>
<path d="M1155.2,11.6 L1159.6,16.4 L1156.4,16.4 L1156.4,24.6 L1154,24.6 L1154,16.4 L1150.8,16.4 Z" fill="#222"/><path d="M1167,22.4 L1172.8,22.4 L1169.9,25.6 Z" fill="#333"/>
<g><path d="M1211.7,23.6 Q1211.0,26.5 1208.8,27.2 Q1214.4,27.1 1215.7,24.7" fill="none" stroke="#a8a8a8" stroke-width="1.3" stroke-linejoin="round"/><ellipse cx="1217" cy="19" rx="8.6" ry="5.8" fill="none" stroke="#a8a8a8" stroke-width="1.3"/><circle cx="1213.56" cy="19" r="0.8" fill="#a8a8a8"/><circle cx="1217" cy="19" r="0.8" fill="#a8a8a8"/><circle cx="1220.44" cy="19" r="0.8" fill="#a8a8a8"/></g>
<path d="M466,489.4 L469,489.4 L469,499.4 L473.6,499.4 L467.5,506.8 L461.4,499.4 L466,499.4 Z" fill="#007960"/>
<path d="M466,587.6 L469,587.6 L469,577.8 L473.6,577.8 L467.5,570.4 L461.4,577.8 L466,577.8 Z" fill="#007960"/>
<g fill="#007960"><path d="M956.2,498.3 L965.4,490 L965.4,506.6 Z"/><path d="M965,498.3 L974.3,490 L974.3,506.6 Z"/><path d="M992.4,498.3 L1002.8,490 L1002.8,506.6 Z"/><path d="M1081.6,498.3 L1071.4,490 L1071.4,506.6 Z"/><path d="M1109,498.3 L1099.7,490 L1099.7,506.6 Z"/><path d="M1117.9,498.3 L1108.6,490 L1108.6,506.6 Z"/><path d="M1144.6,498.3 L1135.5,490 L1135.5,506.6 Z"/><rect x="1144.2" y="490" width="2.9" height="16.6"/></g>
<g fill="none" stroke="#007960" stroke-width="2"><path d="M1168.4,496.6 A5.4,5.4 0 0 1 1177.6,494.4"/><path d="M1179,500 A5.4,5.4 0 0 1 1169.8,502.2"/></g><path d="M1179.8,492 L1179.8,497 L1174.8,497 Z" fill="#007960"/><path d="M1167.4,504.6 L1167.4,499.6 L1172.4,499.6 Z" fill="#007960"/>
<path d="M463.6,604 L463.6,618 L481.7,618" fill="none" stroke="#fff" stroke-width="1.1"/><path d="M466,616.2 L466,611.6 L470.2,606.2 L474,610.2 L477.2,607.6 L480.4,616.2 Z" fill="#fff"/>
<path d="M532.5,643.0999999999999 L539.9000000000001,650.5 M539.9000000000001,643.0999999999999 L532.5,650.5" stroke="#666" stroke-width="3.1" stroke-linecap="square" fill="none"/>
<path d="M532.5,672.3 L539.9000000000001,679.7 M539.9000000000001,672.3 L532.5,679.7" stroke="#007960" stroke-width="3.1" stroke-linecap="square" fill="none"/>
<rect x="555.9" y="640.1" width="11.6" height="11.6" rx="2.6" fill="#fff" stroke="#3a3a3a" stroke-width="1.1"/>
<rect x="555.9" y="668.6" width="11.6" height="11.6" rx="2.6" fill="#fff" stroke="#3a3a3a" stroke-width="1.1"/>
<path d="M616.4,645.8 L621.1999999999999,640.4 L626.0,645.8 Z M616.4,647.6 L621.1999999999999,653 L626.0,647.6 Z" fill="#777"/>
<path d="M690.1,645.8 L694.9,640.4 L699.7,645.8 Z M690.1,647.6 L694.9,653 L699.7,647.6 Z" fill="#777"/>
<g fill="#007960"><path d="M489.8,668.2 C486,668 482.4,670 480.2,673.4 L476,673.8 L474.8,676.4 L478.6,676.6 L481.4,679.4 L481.6,683.2 L484.2,682 L484.6,677.8 C488,675.6 490,672 489.8,668.2 Z"/><path d="M478.4,678.6 L479.6,679.8 L477,682 Z"/></g><circle cx="486.2" cy="671.8" r="1.1" fill="#f9f9f9"/>
<circle cx="512.8" cy="675.2" r="6.9" fill="#007960"/><rect x="511.6" y="670.2" width="2.5" height="1.8" fill="#f9f9f9"/><path d="M510.8,673.2 L514.2,673.2 L514.2,678.2 L515.2,678.2 L515.2,679.9 L510.6,679.9 L510.6,678.2 L511.6,678.2 L511.6,674.8 L510.8,674.8 Z" fill="#f9f9f9"/>
<path d="M584.6,678 L588.6,666.4 L593,679.6 L596.4,671.4 L599,680.2 L601.8,675" fill="none" stroke="#3c3ca8" stroke-width="1.8" stroke-linejoin="round"/>
<g><path d="M785.5,676.2 Q784.9,678.8 782.8,679.4 Q788.1,679.3 789.4,677.1" fill="none" stroke="#1a6f8c" stroke-width="1.4" stroke-linejoin="round"/><ellipse cx="790.6" cy="672" rx="8.2" ry="5.2" fill="none" stroke="#1a6f8c" stroke-width="1.4"/><circle cx="787.32" cy="672" r="0.75" fill="#1a6f8c"/><circle cx="790.6" cy="672" r="0.75" fill="#1a6f8c"/><circle cx="793.88" cy="672" r="0.75" fill="#1a6f8c"/></g>
</svg>
</body></html>
